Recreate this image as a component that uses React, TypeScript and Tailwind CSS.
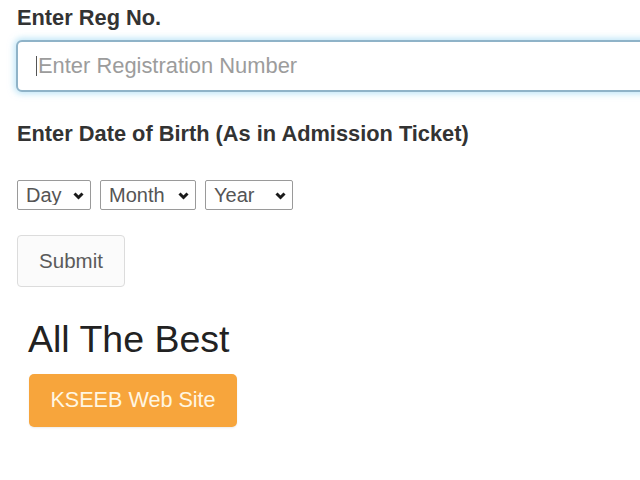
import { useState } from "react";

function Chevron() {
   return (
      <svg width="11" height="8" viewBox="0 0 11 8" className="pointer-events-none absolute right-[7px] top-[12px]">
         <polyline points="1.5,1.5 5.5,5.5 9.5,1.5" fill="none" stroke="#1a1a1a" strokeWidth="3" />
      </svg>
   );
}

function Picker({ label, width, options }: { label: string; width: string; options: string[] }) {
   return (
      <div className={`relative h-[30px] ${width}`}>
         <select className="h-full w-full appearance-none rounded-[2px] border-[1.5px] border-[#9a9a9a] bg-white pl-[8px] text-[20px] leading-none text-[#555] outline-none">
            <option>{label}</option>
            {options.map((o) => (
               <option key={o}>{o}</option>
            ))}
         </select>
         <Chevron />
      </div>
   );
}

export default function App() {
   const [reg, setReg] = useState('');
   const days = Array.from({ length: 31 }, (_, i) => String(i + 1));
   const months = ["Jan", "Feb", "Mar", "Apr", "May", "Jun", "Jul", "Aug", "Sep", "Oct", "Nov", "Dec"];
   const years = ["2004", "2005", "2006", "2007", "2008"];

   return (
      <div className="h-[480px] w-[640px] overflow-hidden bg-white font-['Liberation_Sans',Arial,sans-serif]">
         <div className="flex flex-col items-start pl-[17px] pt-[6px]">
            <label className="text-[21.8px] font-bold leading-[24px] text-[#333]">Enter Reg No.</label>
            <div className="relative mt-[10px] w-[660px] -ml-[1px]">
               <input
                  type="text"
                  value={reg}
                  onChange={(e) => setReg(e.target.value)}
                  placeholder="Enter Registration Number"
                  className="h-[52px] w-full rounded-[6px] border-2 border-[#8fb3c8] bg-white pl-[20px] text-[21.9px] text-[#333] shadow-[0_0_6px_2px_rgba(140,210,240,0.55)] outline-none placeholder:text-[#9c9c9c]"
               />
               <span className="pointer-events-none absolute left-[20px] top-[16px] h-[20px] w-px bg-[#555]" />
            </div>

            <label className="mt-[30px] text-[21.8px] font-bold leading-[24px] text-[#333]">
               Enter Date of Birth (As in Admission Ticket)
            </label>

            <div className="mt-[34px] flex gap-[9px]">
               <Picker label="Day" width="w-[74px]" options={days} />
               <Picker label="Month" width="w-[96px]" options={months} />
               <Picker label="Year" width="w-[88px]" options={years} />
            </div>

            <button className="mt-[25px] h-[52px] w-[108px] rounded-[4px] border border-[#dcdcdc] bg-[#fbfbfb] text-[20.5px] text-[#5a5a5a]">
               Submit
            </button>

            <h2 className="ml-[11px] mt-[30px] text-[37.5px] leading-[44px] text-[#222]">All The Best</h2>

            <button className="ml-[12px] mt-[13px] h-[53px] w-[208px] rounded-[5px] bg-[#f7a53c] text-[21.6px] text-[#fff6e2] shadow-[0_1px_2px_rgba(0,0,0,0.08)]">
               KSEEB Web Site
            </button>
         </div>
      </div>
   );
}
